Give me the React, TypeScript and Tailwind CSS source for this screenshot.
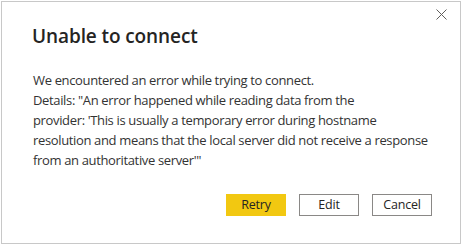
export default function App() {
  return (
    <div className="w-[464px] h-[247px] bg-white" style={{ fontFamily: '"Open Sans", "Noto Sans", sans-serif' }}>
      <div className="relative ml-px mt-px w-[460px] h-[243px] border border-[#c8c8c8] bg-white flex flex-col">
        <button className="absolute right-[12px] top-[5px] w-[14px] h-[14px] flex items-center justify-center text-[#605e5c]">
          <svg width="11" height="11" viewBox="0 0 11 11">
            <path d="M0.5 0.5 L10.5 10.5 M10.5 0.5 L0.5 10.5" stroke="currentColor" strokeWidth="1" />
          </svg>
        </button>
        <h1 className="pl-[30px] pt-[20px] text-[19px] leading-[28px] font-semibold tracking-[-0.1px] text-[#252423]">Unable to connect</h1>
        <div className="pl-[31px] pt-[20px] text-[13px] leading-[20px] tracking-[-0.35px] text-[#333333] whitespace-nowrap">
          <p>We encountered an error while trying to connect.</p>
          <p>Details: "An error happened while reading data from the</p>
          <p>provider: 'This is usually a temporary error during hostname</p>
          <p>resolution and means that the local server did not receive a response</p>
          <p>from an authoritative server'"</p>
        </div>
        <div className="mt-auto mb-[27px] mr-[28px] flex justify-end gap-[13px] text-[12.5px] tracking-[-0.2px]">
          <button className="w-[60px] h-[22px] bg-[#f2c811] text-[#252423]">Retry</button>
          <button className="w-[60px] h-[22px] border border-[#8a8886] bg-white text-[#252423]">Edit</button>
          <button className="w-[60px] h-[22px] border border-[#8a8886] bg-white text-[#252423]">Cancel</button>
        </div>
      </div>
    </div>
  );
}
